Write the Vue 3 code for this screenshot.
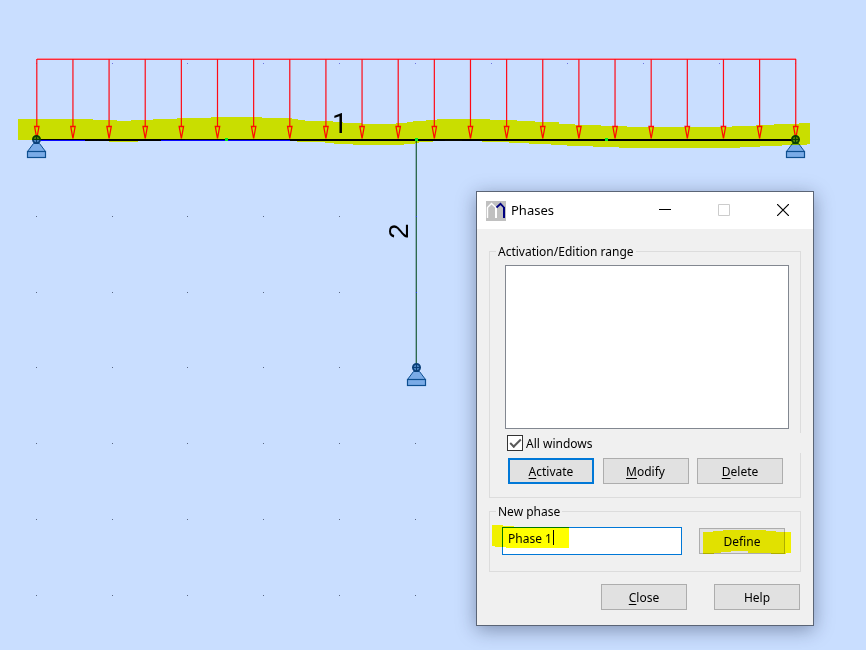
<script setup>
import { ref } from 'vue'

const phaseName = ref('Phase 1')
const allWindows = ref(true)

const arrows = Array.from({ length: 22 }, (_, i) => 36.8 + i * 36.14)

const dots = []
for (let row = 0; row < 8; row++) {
  if (row === 1) continue
  for (let col = 0; col < 11; col++) {
    if (row > 1 && col > 5) continue
    if (row > 1 && row < 5 && col === 5) continue
    dots.push({
      x: Math.round(35.6 + col * 75.9),
      y: row === 0 ? 63 : Math.round(63.8 + row * 75.9),
      top: row === 0
    })
  }
}

const supports = [
  { x: 36.5, y: 139.5 },
  { x: 795.5, y: 139.5 },
  { x: 416.5, y: 367.5 }
]

// Stepped marker stroke: [x where the step ends, y] pairs along each edge.
function marker(start, top, bottom) {
  let d = `M${start} ${top[0][1]}`
  for (const [x, y] of top) d += `V${y}H${x}`
  for (const [x, y] of bottom) d += `V${y}H${x}`
  return d + 'Z'
}

const beamMarker = marker(
  18,
  [[93, 119], [117, 120], [131, 121], [153, 120], [177, 119], [211, 118], [262, 117], [292, 118],
    [298, 119], [305, 120], [333, 121], [343, 122], [362, 123], [396, 124], [407, 123], [413, 122],
    [426, 121], [437, 120], [490, 119], [517, 120], [535, 121], [559, 122], [575, 124], [601, 125],
    [627, 126], [732, 127], [756, 126], [774, 125], [799, 124], [810, 123]],
  [[807, 144], [782, 145], [760, 146], [740, 147], [619, 148], [593, 147], [567, 146], [551, 145],
    [529, 144], [509, 143], [482, 142], [433, 141], [419, 142], [415, 143], [404, 144], [353, 145],
    [334, 144], [325, 143], [297, 142], [138, 140], [109, 142], [18, 140]]
)
const nameMarker = marker(15, [[26, 333], [37, 334], [92, 335]], [[29, 356], [18, 355], [15, 354]])
const defineMarker = marker(
  226,
  [[236, 340], [246, 339], [289, 338], [299, 339], [314, 340]],
  [[309, 361], [294, 362], [271, 361], [254, 359], [244, 360], [237, 361], [226, 362]]
)
</script>

<template>
  <main class="workspace">
    <svg class="drawing" aria-label="Structure model">
      <rect v-for="(d, i) in dots" :key="i" :x="d.x" :y="d.y" width="1" height="1" :fill="d.top ? '#6f74e0' : '#5a6884'" />

      <g fill="none" stroke="#ff0a14">
        <path d="M37 58.5H796" stroke="#f08c9c" />
        <path d="M37 59.5H796" stroke="#fb2a3c" />
        <g v-for="x in arrows" :key="x">
          <path :d="`M${x} 59V126`" stroke-width="1.2" />
          <path :d="`M${x - 2.2} 126.5H${x + 2.2}L${x} 138.5Z`" stroke-width="1.3" />
        </g>
      </g>

      <path d="M416.5 140V364" stroke="#2f6a4d" />
      <path d="M415.5 140V364" stroke="#8fb2c0" />
      <path d="M416 216.5h1M416 292.5h1" stroke="#2030ff" />

      <path d="M36 140H796" stroke="#000" stroke-width="2" />
      <path d="M40 140.5H85M161 140.5H290M445 140.5H462" stroke="#0808ff" />
      <path d="M185 139.5H280" stroke="#0808ff" />

      <g v-for="s in supports" :key="s.x" :transform="`translate(${s.x} ${s.y})`" stroke="#0d4f91">
        <path d="M-3 4H3L9 12H-9Z" fill="#7aabe7" />
        <rect x="-9" y="12" width="18" height="6" fill="#7aabe7" stroke-width="1.2" />
        <circle r="3.6" fill="#4d84c0" stroke="#0a3f78" stroke-width="1.8" />
        <path d="M-4 0H4M0-4V4" stroke="#0a3f78" />
      </g>

      <path class="marker" :d="beamMarker" />
      <path d="M225 138h3v3h-3zM415 138h3v3h-3zM605 138h3v3h-3z" fill="#00f020" />

      <text class="member beam" x="332" y="133">1</text>
      <text class="member" transform="translate(408 239) rotate(-90)">2</text>
    </svg>

    <section class="dialog" role="dialog" aria-labelledby="dialog-title">
      <header class="titlebar">
        <svg class="app-icon" viewBox="0 0 20 20" aria-hidden="true">
          <rect width="20" height="20" fill="#c0c0c0" />
          <g fill="none" stroke-width="1.4">
            <path d="M1.5 17V6.5L5.5 2.5L10 6.8V17" stroke="#fff" />
            <path d="M10 7V17" stroke="#fff" stroke-width="2" />
            <path d="M10.5 6.5L14.5 2.8L18 6.5" stroke="#000080" stroke-width="1.8" />
            <path d="M18 6V17" stroke="#000080" stroke-width="2" />
          </g>
        </svg>
        <h1 id="dialog-title">Phases</h1>
        <div class="window-controls">
          <button type="button" aria-label="Minimize">
            <svg viewBox="0 0 12 12"><path d="M0 5.5H12" stroke="#000" /></svg>
          </button>
          <button type="button" aria-label="Maximize" disabled>
            <svg viewBox="0 0 12 12"><path d="M.5 .5H11.5V11.5H.5Z" stroke="#ccc" fill="none" /></svg>
          </button>
          <button type="button" aria-label="Close window">
            <svg viewBox="0 0 12 12"><path d="M0 0L12 12M12 0L0 12" stroke="#000" stroke-width="1.2" /></svg>
          </button>
        </div>
      </header>

      <form class="body" @submit.prevent>
        <fieldset class="range">
          <legend>Activation/Edition range</legend>
          <div class="list" role="listbox" aria-label="Activation/Edition range"></div>
          <label class="check">
            <input v-model="allWindows" type="checkbox" />
            <span>All windows</span>
          </label>
          <div class="actions">
            <button type="button" class="btn primary"><u>A</u>ctivate</button>
            <button type="button" class="btn"><u>M</u>odify</button>
            <button type="button" class="btn"><u>D</u>elete</button>
          </div>
        </fieldset>

        <fieldset class="new-phase">
          <legend id="new-phase-label">New phase</legend>
          <div class="entry">
            <input v-model="phaseName" type="text" aria-labelledby="new-phase-label" />
            <button type="button" class="btn">Define</button>
          </div>
        </fieldset>

        <footer class="footer">
          <button type="button" class="btn"><u>C</u>lose</button>
          <button type="button" class="btn">Help</button>
        </footer>
      </form>

      <svg class="overlay" aria-hidden="true">
        <path :d="nameMarker" />
        <path :d="defineMarker" />
        <path d="M76 338h1v15h-1z" fill="#000" />
      </svg>
    </section>
  </main>
</template>

<style>
body {
  margin: 0;
}
</style>

<style scoped>
.workspace {
  position: relative;
  min-height: 100vh;
  overflow: hidden;
  background: #c9deff;
  font-family: "Noto Sans", "Open Sans", sans-serif;
  font-size: 12px;
  line-height: 16px;
  color: #000;
}

.drawing {
  position: absolute;
  inset: 0;
  width: 100%;
  height: 100%;
}

.marker {
  fill: #ff0;
  mix-blend-mode: multiply;
}

.member {
  font-family: "Liberation Sans", Arial, sans-serif;
  font-size: 28px;
}

.member.beam {
  font-family: Roboto, "Liberation Sans", sans-serif;
}

.dialog {
  position: absolute;
  left: 476px;
  top: 191px;
  box-sizing: border-box;
  width: 338px;
  border: 1px solid #5b6576;
  background: #f0f0f0;
  box-shadow: 0 4px 18px rgba(20, 30, 60, 0.4);
}

.titlebar {
  display: flex;
  align-items: center;
  height: 37px;
  padding-left: 9px;
  background: #fff;
}

.app-icon {
  width: 20px;
  height: 20px;
}

h1 {
  margin: 0 0 0 5px;
  font-size: 13px;
  font-weight: 400;
  line-height: 18px;
}

.window-controls {
  display: flex;
  margin-left: auto;
  padding-right: 1px;
}

.window-controls button {
  display: flex;
  align-items: center;
  justify-content: center;
  width: 59px;
  height: 36px;
  padding: 0;
  border: 0;
  background: none;
}

.window-controls svg {
  width: 12px;
  height: 12px;
}

.titlebar h1,
.window-controls {
  margin-bottom: 1px;
}

.body {
  padding: 13px 12px 15px;
}

fieldset {
  min-width: 0;
  margin: 0;
  border: 1px solid #dcdcdc;
}

legend {
  padding: 2px 2px 0;
}

.range {
  padding: 5px 11px 13px 15px;
}

.range legend {
  margin-left: -9px;
}

.list {
  box-sizing: border-box;
  height: 164px;
  border: 1px solid #828790;
  background: #fff;
}

.check {
  display: flex;
  align-items: center;
  gap: 3px;
  height: 20px;
  margin: 4px -12px 5px 0;
  padding-left: 2px;
  background: #f0f0f0;
}

.check span {
  padding-top: 2px;
}

.check input {
  appearance: none;
  box-sizing: border-box;
  width: 16px;
  height: 16px;
  margin: 0;
  border: 1px solid #333;
  background: #fff;
}

.check input:checked::before {
  content: "";
  display: block;
  box-sizing: border-box;
  width: 11px;
  height: 6px;
  margin: 3px 0 0 2px;
  border-left: 2px solid #5a5a5a;
  border-bottom: 2px solid #5a5a5a;
  transform: rotate(-45deg);
}

.actions {
  display: flex;
  justify-content: space-between;
  padding: 0 6px 0 3px;
}

.btn {
  box-sizing: border-box;
  width: 86px;
  height: 26px;
  padding: 2px 0 0;
  border: 1px solid #adadad;
  background: #e1e1e1;
  color: #000;
  font: inherit;
}

.btn.primary {
  border: 2px solid #0078d7;
}

u {
  text-underline-offset: 2px;
}

.new-phase {
  margin-top: 4px;
  padding: 7px 15px 16px 12px;
}

.new-phase legend {
  margin-left: -6px;
}

.entry {
  display: flex;
  align-items: center;
  justify-content: space-between;
}

.entry input {
  box-sizing: border-box;
  width: 180px;
  height: 28px;
  padding: 0 5px 5px;
  border: 1px solid #0078d7;
  border-radius: 0;
  outline: 0;
  background: #fff;
  color: #000;
  font: inherit;
}

.footer {
  display: flex;
  justify-content: flex-end;
  gap: 27px;
  margin-top: 12px;
  padding-right: 1px;
}

.overlay {
  position: absolute;
  inset: 0;
  width: 100%;
  height: 100%;
  fill: #ff0;
  mix-blend-mode: multiply;
  pointer-events: none;
}
</style>
